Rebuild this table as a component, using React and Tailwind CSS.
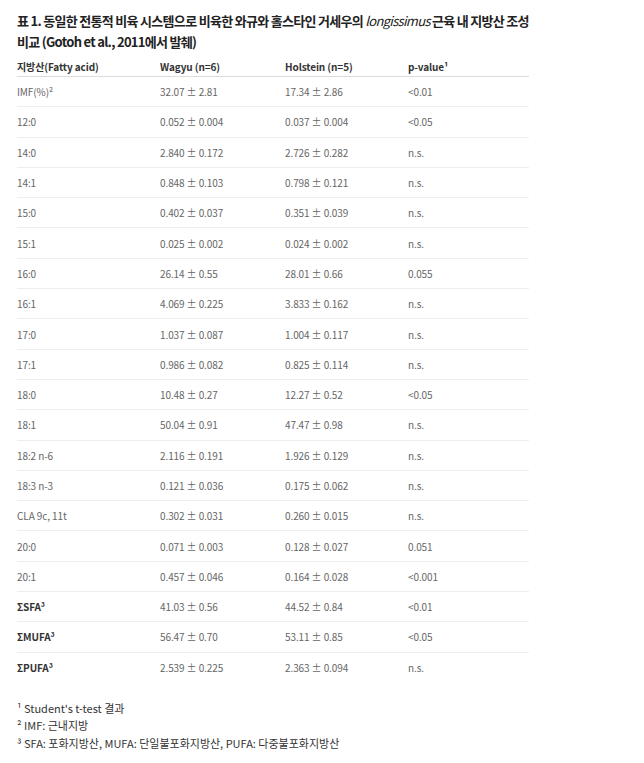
const ROWS = [
  { name: 'IMF(%)²', wagyu: '32.07 ± 2.81', holstein: '17.34 ± 2.86', p: '<0.01' },
  { name: '12:0', wagyu: '0.052 ± 0.004', holstein: '0.037 ± 0.004', p: '<0.05' },
  { name: '14:0', wagyu: '2.840 ± 0.172', holstein: '2.726 ± 0.282', p: 'n.s.' },
  { name: '14:1', wagyu: '0.848 ± 0.103', holstein: '0.798 ± 0.121', p: 'n.s.' },
  { name: '15:0', wagyu: '0.402 ± 0.037', holstein: '0.351 ± 0.039', p: 'n.s.' },
  { name: '15:1', wagyu: '0.025 ± 0.002', holstein: '0.024 ± 0.002', p: 'n.s.' },
  { name: '16:0', wagyu: '26.14 ± 0.55', holstein: '28.01 ± 0.66', p: '0.055' },
  { name: '16:1', wagyu: '4.069 ± 0.225', holstein: '3.833 ± 0.162', p: 'n.s.' },
  { name: '17:0', wagyu: '1.037 ± 0.087', holstein: '1.004 ± 0.117', p: 'n.s.' },
  { name: '17:1', wagyu: '0.986 ± 0.082', holstein: '0.825 ± 0.114', p: 'n.s.' },
  { name: '18:0', wagyu: '10.48 ± 0.27', holstein: '12.27 ± 0.52', p: '<0.05' },
  { name: '18:1', wagyu: '50.04 ± 0.91', holstein: '47.47 ± 0.98', p: 'n.s.' },
  { name: '18:2 n-6', wagyu: '2.116 ± 0.191', holstein: '1.926 ± 0.129', p: 'n.s.' },
  { name: '18:3 n-3', wagyu: '0.121 ± 0.036', holstein: '0.175 ± 0.062', p: 'n.s.' },
  { name: 'CLA 9c, 11t', wagyu: '0.302 ± 0.031', holstein: '0.260 ± 0.015', p: 'n.s.' },
  { name: '20:0', wagyu: '0.071 ± 0.003', holstein: '0.128 ± 0.027', p: '0.051' },
  { name: '20:1', wagyu: '0.457 ± 0.046', holstein: '0.164 ± 0.028', p: '<0.001' },
  { name: 'ΣSFA³', wagyu: '41.03 ± 0.56', holstein: '44.52 ± 0.84', p: '<0.01', bold: true },
  { name: 'ΣMUFA³', wagyu: '56.47 ± 0.70', holstein: '53.11 ± 0.85', p: '<0.05', bold: true },
  { name: 'ΣPUFA³', wagyu: '2.539 ± 0.225', holstein: '2.363 ± 0.094', p: 'n.s.', bold: true },
];

export default function App() {
  return (
    <div
      className="bg-white min-h-screen pl-[17px] pt-[10px] text-[#222]"
      style={{ fontFamily: '"Noto Sans CJK KR", "Noto Sans", sans-serif' }}
    >
      <h2 className="text-[13px] font-bold leading-[21px] tracking-[-0.7px] mb-[4px]">
        <span className="whitespace-nowrap">
          표 1. 동일한 전통적 비육 시스템으로 비육한 와규와 홀스타인 거세우의 <i className="font-normal">longissimus</i> 근육 내 지방산 조성
        </span>
        <br />
        비교 (Gotoh et al., 2011에서 발췌)
      </h2>

      <div className="w-[512px] text-[10px] tracking-[-0.1px]">
        <div className="grid grid-cols-[143px_125px_123px_121px] h-[21px] items-center border-b border-[#dcdcdc] font-semibold text-[#333]">
          <div>지방산(Fatty acid)</div>
          <div>Wagyu (n=6)</div>
          <div>Holstein (n=5)</div>
          <div>p-value¹</div>
        </div>
        {ROWS.map((r, i) => (
          <div
            key={r.name}
            className={`grid grid-cols-[143px_125px_123px_121px] h-[30.3px] items-center text-[#666] ${
              i < ROWS.length - 1 ? 'border-b border-[#eeeeee]' : ''
            }`}
          >
            <div className={r.bold ? 'font-bold text-[#333]' : ''}>{r.name}</div>
            <div>{r.wagyu}</div>
            <div>{r.holstein}</div>
            <div>{r.p}</div>
          </div>
        ))}
      </div>

      <div className="mt-[17px] text-[11px] leading-[17.5px] text-[#333]">
        <p>¹ Student's t-test 결과</p>
        <p>² IMF: 근내지방</p>
        <p>³ SFA: 포화지방산, MUFA: 단일불포화지방산, PUFA: 다중불포화지방산</p>
      </div>
    </div>
  );
}
